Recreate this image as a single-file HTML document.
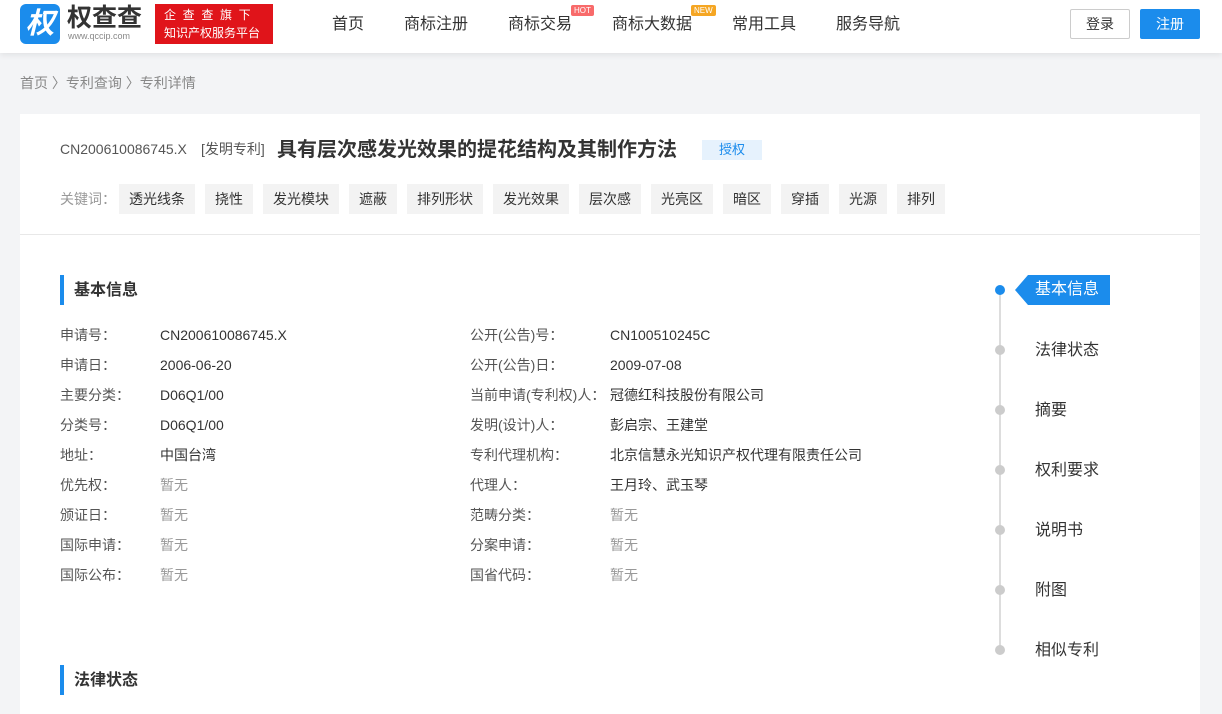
<!DOCTYPE html>
<html><head><meta charset="utf-8"><style>
*{margin:0;padding:0;box-sizing:border-box}
body{width:1222px;height:699px;overflow:hidden;background:#f3f4f6;font-family:"Liberation Sans","Noto Sans CJK SC",sans-serif;color:#333;position:relative}
.hdr{position:absolute;left:0;top:0;width:1222px;height:53px;background:#fff;box-shadow:0 2px 6px rgba(0,0,0,.08)}
.abs{position:absolute;white-space:nowrap}
.nav{font-size:16px;color:#333;top:15px;line-height:20px}
.badge{position:absolute;font-size:8px;color:#fff;padding:0 3px;line-height:11px;border-radius:2px}
.card{position:absolute;left:20px;top:114px;width:1180px;height:600px;background:#fff}
.tag{position:absolute;top:184px;height:30px;line-height:30px;background:#f3f3f3;font-size:14px;color:#333;text-align:center}
.lb{font-size:14px;color:#555}
.v{font-size:14px;color:#333}
.g{color:#999}
.dot{position:absolute;left:995px;width:10px;height:10px;border-radius:50%;background:#ccc}
.tl{font-size:16px;color:#333;left:1035px;line-height:20px}
</style></head><body>
<div class="hdr">
 <div class="abs" style="left:20px;top:4px;width:40px;height:40px;background:#1b8cec;border-radius:6px;color:#fff;font-size:29px;font-weight:bold;text-align:center;line-height:40px;font-style:italic">权</div>
 <div class="abs" style="left:67px;top:4px;font-size:25px;line-height:28px;font-weight:bold;color:#333">权查查</div>
 <div class="abs" style="left:68px;top:31px;font-size:9px;line-height:11px;color:#888">www.qccip.com</div>
 <div class="abs" style="left:155px;top:4px;width:118px;height:40px;background:#e0141a;color:#fff;font-size:12px;line-height:18px;padding:2px 0 0 9px">企&nbsp;&nbsp;查&nbsp;&nbsp;查&nbsp;&nbsp;旗&nbsp;&nbsp;下<br>知识产权服务平台</div>
 <div class="abs nav" style="left:332px">首页</div>
 <div class="abs nav" style="left:404px">商标注册</div>
 <div class="abs nav" style="left:508px">商标交易</div>
 <div class="badge" style="left:571px;top:5px;background:#f86a6a">HOT</div>
 <div class="abs nav" style="left:612px">商标大数据</div>
 <div class="badge" style="left:691px;top:5px;background:#f5a623">NEW</div>
 <div class="abs nav" style="left:732px">常用工具</div>
 <div class="abs nav" style="left:836px">服务导航</div>
 <div class="abs" style="left:1070px;top:9px;width:60px;height:30px;border:1px solid #ccc;border-radius:2px;font-size:14px;text-align:center;line-height:28px">登录</div>
 <div class="abs" style="left:1140px;top:9px;width:60px;height:30px;background:#1b8cec;border-radius:2px;color:#fff;font-size:14px;text-align:center;line-height:30px">注册</div>
</div>
<div class="abs" style="left:20px;top:74px;font-size:14px;line-height:18px;color:#888">首页 〉专利查询 〉专利详情</div>
<div class="card"></div>
<div class="abs" style="left:60px;top:141px;font-size:14px;line-height:16px;color:#555">CN200610086745.X</div>
<div class="abs" style="left:201px;top:140px;font-size:14px;line-height:18px;color:#555">[发明专利]</div>
<div class="abs" style="left:277px;top:137px;font-size:20px;line-height:26px;font-weight:bold;color:#333">具有层次感发光效果的提花结构及其制作方法</div>
<div class="abs" style="left:702px;top:140px;width:60px;height:20px;background:#e6f2fd;color:#1b8cec;font-size:13px;text-align:center;line-height:20px">授权</div>
<div class="abs" style="left:60px;top:190px;font-size:14px;line-height:18px;color:#999">关键词：</div>
<div class="tag" style="left:119px;width:76px">透光线条</div>
<div class="tag" style="left:205px;width:48px">挠性</div>
<div class="tag" style="left:263px;width:76px">发光模块</div>
<div class="tag" style="left:349px;width:48px">遮蔽</div>
<div class="tag" style="left:407px;width:76px">排列形状</div>
<div class="tag" style="left:493px;width:76px">发光效果</div>
<div class="tag" style="left:579px;width:62px">层次感</div>
<div class="tag" style="left:651px;width:62px">光亮区</div>
<div class="tag" style="left:723px;width:48px">暗区</div>
<div class="tag" style="left:781px;width:48px">穿插</div>
<div class="tag" style="left:839px;width:48px">光源</div>
<div class="tag" style="left:897px;width:48px">排列</div>
<div class="abs" style="left:20px;top:234px;width:1180px;height:1px;background:#e8e8e8"></div>
<div class="abs" style="left:60px;top:275px;width:4px;height:30px;background:#1b8cec"></div>
<div class="abs" style="left:74px;top:281px;font-size:16px;line-height:20px;font-weight:bold">基本信息</div>
<div class="abs" style="left:60px;top:665px;width:4px;height:30px;background:#1b8cec"></div>
<div class="abs" style="left:74px;top:671px;font-size:16px;line-height:20px;font-weight:bold">法律状态</div>

<div class="abs lb" style="left:60px;top:320px;line-height:30px">申请号：<br>申请日：<br>主要分类：<br>分类号：<br>地址：<br>优先权：<br>颁证日：<br>国际申请：<br>国际公布：</div>
<div class="abs v" style="left:160px;top:320px;line-height:30px">CN200610086745.X<br>2006-06-20<br>D06Q1/00<br>D06Q1/00<br>中国台湾<br><span class="g">暂无</span><br><span class="g">暂无</span><br><span class="g">暂无</span><br><span class="g">暂无</span></div>
<div class="abs lb" style="left:470px;top:320px;line-height:30px">公开(公告)号：<br>公开(公告)日：<br>当前申请(专利权)人：<br>发明(设计)人：<br>专利代理机构：<br>代理人：<br>范畴分类：<br>分案申请：<br>国省代码：</div>
<div class="abs v" style="left:610px;top:320px;line-height:30px">CN100510245C<br>2009-07-08<br>冠德红科技股份有限公司<br>彭启宗、王建堂<br>北京信慧永光知识产权代理有限责任公司<br>王月玲、武玉琴<br><span class="g">暂无</span><br><span class="g">暂无</span><br><span class="g">暂无</span></div>

<div class="abs" style="left:999px;top:290px;width:2px;height:360px;background:#ddd"></div>
<div class="dot" style="top:285px;background:#1b8cec"></div>
<div class="dot" style="top:345px"></div>
<div class="dot" style="top:405px"></div>
<div class="dot" style="top:465px"></div>
<div class="dot" style="top:525px"></div>
<div class="dot" style="top:585px"></div>
<div class="dot" style="top:645px"></div>
<div class="abs" style="left:1015px;top:275px;width:0;height:0;border-top:15px solid transparent;border-bottom:15px solid transparent;border-right:13px solid #1b8cec"></div>
<div class="abs" style="left:1028px;top:275px;width:82px;height:30px;background:#1b8cec;color:#fff;font-size:16px;line-height:30px;padding-left:7px">基本信息</div>
<div class="abs tl" style="top:341px">法律状态</div>
<div class="abs tl" style="top:401px">摘要</div>
<div class="abs tl" style="top:461px">权利要求</div>
<div class="abs tl" style="top:521px">说明书</div>
<div class="abs tl" style="top:581px">附图</div>
<div class="abs tl" style="top:641px">相似专利</div>
</body></html>
